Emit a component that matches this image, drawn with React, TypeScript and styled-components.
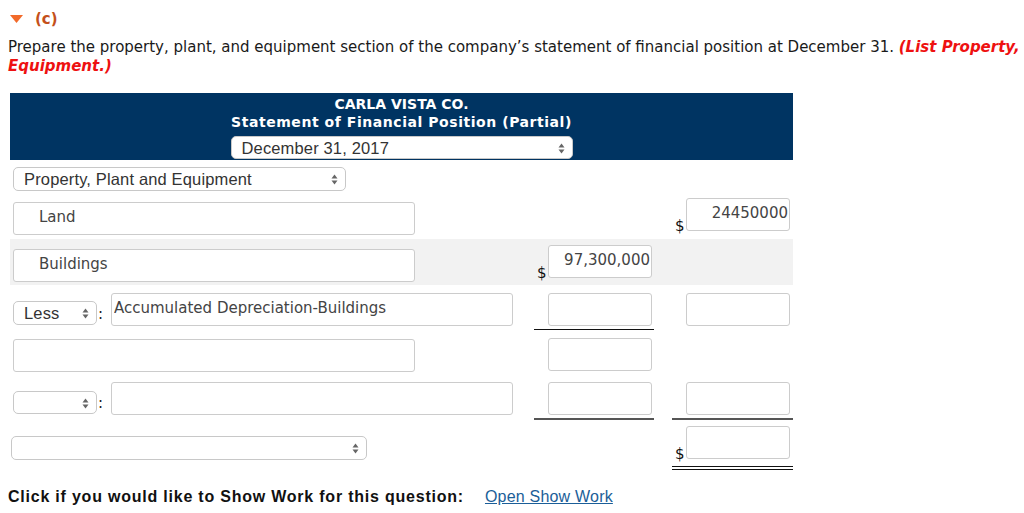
import React from "react";
import styled, { createGlobalStyle } from "styled-components";

const GlobalStyle = createGlobalStyle`
  html, body {
    margin: 0;
    padding: 0;
    background: #ffffff;
  }
  body {
    font-family: "DejaVu Sans", Verdana, sans-serif;
    color: #222;
  }
`;

const Page = styled.div`
  padding: 8px 0 0 8px;
  width: 1024px;
  box-sizing: border-box;
`;

const PartHeader = styled.div`
  display: flex;
  align-items: center;
  gap: 12px;
  height: 22px;
  padding-left: 2px;
`;

const PartLabel = styled.span`
  font-family: "DejaVu Sans", Verdana, sans-serif;
  font-weight: bold;
  font-size: 15px;
  color: #c4501b;
`;

const Instructions = styled.p`
  margin: 8px 0 0;
  font-size: 15px;
  line-height: 19px;
  color: #1a1a1a;
`;

const Hint = styled.em`
  color: #ee1111;
  font-weight: bold;
  white-space: nowrap;
`;

const Sheet = styled.div`
  margin: 17px 0 0 2px;
  width: 783px;
`;

const Banner = styled.div`
  background: #003462;
  color: #ffffff;
  height: 67px;
  display: flex;
  flex-direction: column;
  align-items: center;
  padding-top: 2px;
  box-sizing: border-box;
  font-family: "DejaVu Sans", Verdana, sans-serif;
  font-weight: bold;
  font-size: 14px;
  line-height: 18px;
`;

const BannerLine = styled.div<{ spacing: number }>`
  letter-spacing: ${(p) => p.spacing}px;
`;

const SelectWrap = styled.div<{ w: number; h?: number }>`
  position: relative;
  width: ${(p) => p.w}px;
  height: ${(p) => p.h ?? 24}px;
  flex-shrink: 0;
`;

const Select = styled.select`
  appearance: none;
  -webkit-appearance: none;
  width: 100%;
  height: 100%;
  box-sizing: border-box;
  border: 1px solid #c8c8c8;
  border-radius: 5px;
  background: #ffffff;
  font-family: "Liberation Sans", Arial, sans-serif;
  font-size: 16.5px;
  letter-spacing: 0.15px;
  color: #333;
  padding: 0 24px 0 10px;
  outline: none;
`;

const Arrows = styled.svg`
  position: absolute;
  right: 8px;
  top: 50%;
  margin-top: -5px;
  pointer-events: none;
`;

const Row = styled.div<{ h: number; shade?: boolean }>`
  display: grid;
  grid-template-columns: 506px 120px 121px;
  column-gap: 18px;
  height: ${(p) => p.h}px;
  background: ${(p) => (p.shade ? "#f2f2f2" : "transparent")};
`;

const LabelCell = styled.div<{ top: number }>`
  display: flex;
  align-items: flex-start;
  padding: ${(p) => p.top}px 0 0 3px;
`;

const Colon = styled.span`
  width: 14px;
  font-size: 15px;
  padding: 12px 0 0 1px;
  box-sizing: border-box;
  color: #222;
`;

const TextBox = styled.input<{ pad?: number }>`
  width: 402px;
  height: 33px;
  box-sizing: border-box;
  border: 1px solid #cccccc;
  border-radius: 3px;
  background: #ffffff;
  font-family: "DejaVu Sans", Verdana, sans-serif;
  font-size: 15px;
  color: #444;
  padding: 0 0 4px ${(p) => (p.pad ?? 25)}px;
  outline: none;
`;

const AmountCell = styled.div<{ top: number; rule?: "single" | "thick" | "double" }>`
  display: flex;
  align-items: flex-end;
  align-self: start;
  padding: ${(p) => p.top}px 2px 0 14px;
  padding-bottom: ${(p) => (p.rule === "double" ? 7 : p.rule ? 3 : 0)}px;
  border-bottom: ${(p) =>
    p.rule === "single"
      ? "1px solid #111"
      : p.rule === "thick"
      ? "2px solid #555"
      : p.rule === "double"
      ? "4px double #111"
      : "none"};
  position: relative;
`;

const Dollar = styled.span<{ lift: number }>`
  position: absolute;
  left: 3px;
  bottom: ${(p) => p.lift}px;
  font-size: 15px;
  line-height: 16px;
  color: #111;
`;

const AmountBox = styled.input`
  width: 104px;
  height: 33px;
  box-sizing: border-box;
  border: 1px solid #cccccc;
  border-radius: 3px;
  background: #ffffff;
  font-family: "DejaVu Sans", Verdana, sans-serif;
  font-size: 15px;
  color: #444;
  text-align: right;
  padding: 0 1px 4px 0;
  outline: none;
`;

const Footer = styled.div`
  margin-top: 15px;
  display: flex;
  gap: 21px;
  font-family: "Liberation Sans", Arial, sans-serif;
  font-size: 16px;
  line-height: 20px;
`;

const FooterLabel = styled.span`
  font-weight: bold;
  color: #111;
  letter-spacing: 0.78px;
`;

const ShowWorkLink = styled.a`
  color: #1b5e98;
  text-decoration: underline;
  letter-spacing: 0.2px;
`;

const UpDown = () => (
  <Arrows width="7" height="11" viewBox="0 0 7 11">
    <path d="M3.5 0.5 L6.5 4.5 L0.5 4.5 Z" fill="#666" />
    <path d="M3.5 10.5 L6.5 6.5 L0.5 6.5 Z" fill="#666" />
  </Arrows>
);

const Dropdown = ({ w, h, value }: { w: number; h?: number; value: string }) => (
  <SelectWrap w={w} h={h}>
    <Select defaultValue={value}>
      <option value={value}>{value}</option>
    </Select>
    <UpDown />
  </SelectWrap>
);

type Rule = "single" | "thick" | "double";
type Amount = { value?: string; dollar?: boolean; rule?: Rule; top: number };

const AmountField = ({ value, dollar, rule, top }: Amount) => (
  <AmountCell top={top} rule={rule}>
    {dollar && <Dollar lift={rule === "double" ? 4 : -3}>$</Dollar>}
    <AmountBox defaultValue={value ?? ""} />
  </AmountCell>
);

export default function App() {
  return (
    <Page>
      <GlobalStyle />
      <PartHeader>
        <svg width="13" height="8" viewBox="0 0 13 8">
          <path d="M0 0 H13 L6.5 8 Z" fill="#f26a2a" />
        </svg>
        <PartLabel>(c)</PartLabel>
      </PartHeader>
      <Instructions>
        Prepare the property, plant, and equipment section of the company’s statement of financial position at
        December 31. <Hint>(List Property,</Hint>
        <br />
        <Hint>Equipment.)</Hint>
      </Instructions>

      <Sheet>
        <Banner>
          <BannerLine spacing={0}>CARLA VISTA CO.</BannerLine>
          <BannerLine spacing={0.55}>Statement of Financial Position (Partial)</BannerLine>
          <div style={{ marginTop: 5 }}>
            <Dropdown w={342} h={23} value="December 31, 2017" />
          </div>
        </Banner>

        <Row h={35}>
          <LabelCell top={7}>
            <Dropdown w={333} value="Property, Plant and Equipment" />
          </LabelCell>
          <div />
          <div />
        </Row>

        <Row h={44}>
          <LabelCell top={7}>
            <TextBox defaultValue="Land" />
          </LabelCell>
          <div />
          <AmountField top={3} value="24450000" dollar />
        </Row>

        <Row h={46} shade>
          <LabelCell top={10}>
            <TextBox defaultValue="Buildings" />
          </LabelCell>
          <AmountField top={6} value="97,300,000" dollar />
          <div />
        </Row>

        <Row h={49}>
          <LabelCell top={8}>
            <div style={{ marginTop: 8 }}>
              <Dropdown w={84} value="Less" />
            </div>
            <Colon>:</Colon>
            <TextBox pad={2} defaultValue="Accumulated Depreciation-Buildings" />
          </LabelCell>
          <AmountField top={8} rule="single" />
          <AmountField top={8} />
        </Row>

        <Row h={42}>
          <LabelCell top={5}>
            <TextBox />
          </LabelCell>
          <AmountField top={4} />
          <div />
        </Row>

        <Row h={46}>
          <LabelCell top={6}>
            <div style={{ marginTop: 9 }}>
              <Dropdown w={84} h={23} value="" />
            </div>
            <Colon>:</Colon>
            <TextBox pad={2} />
          </LabelCell>
          <AmountField top={6} rule="thick" />
          <AmountField top={6} rule="thick" />
        </Row>

        <Row h={50}>
          <LabelCell top={14}>
            <div style={{ marginLeft: -2 }}>
              <Dropdown w={356} value="" />
            </div>
          </LabelCell>
          <div />
          <AmountField top={4} rule="double" dollar />
        </Row>
      </Sheet>

      <Footer>
        <FooterLabel>Click if you would like to Show Work for this question:</FooterLabel>
        <ShowWorkLink href="#">Open Show Work</ShowWorkLink>
      </Footer>
    </Page>
  );
}
